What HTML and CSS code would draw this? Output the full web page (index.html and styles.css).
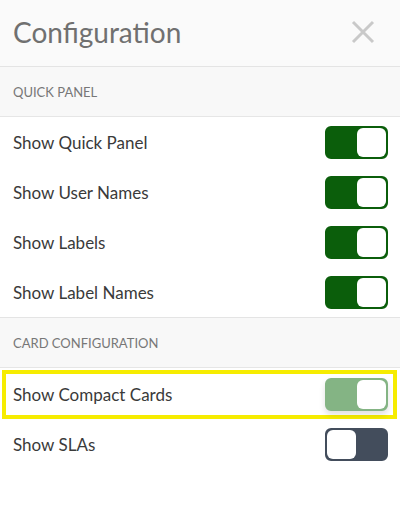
FILE: index.html
```html
<!DOCTYPE html>
<html lang="en">
<head>
  <meta charset="UTF-8" />
  <meta name="viewport" content="width=device-width, initial-scale=1.0"/>
  <title>Configuration</title>
  <link rel="stylesheet" href="styles.css">
</head>
<body>
  <header>
    <h1>Configuration</h1>
    <div class="close-btn">
      <svg width="24" height="24" viewBox="0 0 24 24">
        <path d="M2 2 L22 22 M22 2 L2 22" stroke="#c9c9c9" stroke-width="3" fill="none"/>
      </svg>
    </div>
  </header>

  <div class="section">Quick Panel</div>
  <div class="row">
    <span>Show Quick Panel</span>
    <div class="toggle on"><div class="knob"></div></div>
  </div>
  <div class="row">
    <span>Show User Names</span>
    <div class="toggle on"><div class="knob"></div></div>
  </div>
  <div class="row">
    <span>Show Labels</span>
    <div class="toggle on"><div class="knob"></div></div>
  </div>
  <div class="row">
    <span>Show Label Names</span>
    <div class="toggle on"><div class="knob"></div></div>
  </div>

  <div class="section">Card Configuration</div>
  <div class="row focused">
    <span>Show Compact Cards</span>
    <div class="toggle on faded"><div class="knob"></div></div>
  </div>
  <div class="row">
    <span>Show SLAs</span>
    <div class="toggle off"><div class="knob"></div></div>
  </div>
</body>
</html>
```

FILE: styles.css
```css
body {
  font-family: "Lato", "Open Sans", sans-serif;
  background: #fff;
  margin: 0;
  color: #333;
}
header {
  display: flex;
  justify-content: space-between;
  align-items: center;
  background: #fafafa;
  height: 66px;
  padding: 0 13px;
}
header h1 {
  font-size: 28px;
  font-weight: 400;
  color: #707070;
  margin: -3px 0 0;
}
.close-btn {
  display: flex;
  margin: -3px 12px 0 0;
  cursor: pointer;
}
.section {
  height: 49px;
  display: flex;
  align-items: center;
  padding: 0 13px;
  background: #f8f8f8;
  border-top: 1px solid #e4e4e4;
  border-bottom: 1px solid #e6e6e6;
  font-size: 13px;
  text-transform: uppercase;
  color: #777;
}
.row {
  height: 50px;
  display: flex;
  justify-content: space-between;
  align-items: center;
  padding: 0 12px 0 13px;
  font-size: 17px;
  color: #3a3a3a;
}
.focused {
  height: 41px;
  margin: 2px 3px 0 2px;
  padding: 0 5px 0 7px;
  border: 4px solid #f6ec00;
}
.toggle {
  width: 63px;
  height: 33px;
  box-sizing: border-box;
  border-radius: 6px;
  border: 2px solid;
  display: flex;
}
.toggle .knob {
  width: 29px;
  height: 29px;
  background: #fff;
  border-radius: 6px;
}
.toggle.on {
  background: #0b5e0b;
  border-color: #0b5e0b;
  justify-content: flex-end;
}
.toggle.faded {
  background: #84b484;
  border-color: #84b484;
  box-shadow: 0 4px 6px rgba(0,0,0,0.12);
}
.toggle.off {
  background: #434d5c;
  border-color: #434d5c;
}
```
